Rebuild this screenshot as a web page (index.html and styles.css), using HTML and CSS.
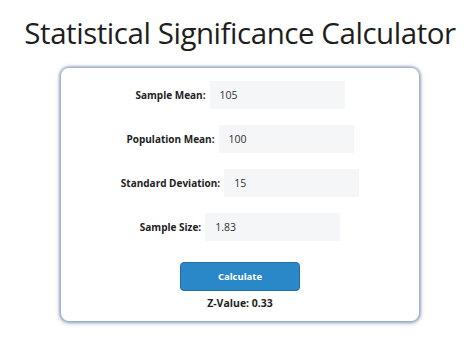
FILE: index.html
```html
<!DOCTYPE html>
<html lang="en">

<head>
    <meta charset="UTF-8">
    <meta name="viewport" content="width=device-width, initial-scale=1.0">
    <title>Statistical Significance Calculator</title>

    <link rel="stylesheet" href="styles.css">
</head>

<body>
    <main>
        <h1>Statistical Significance Calculator</h1>

        <div class="calculator">
            <div class="row">
                <label for="sample-mean">Sample Mean:</label>
                <input type="text" id="sample-mean" value="105">
            </div>

            <div class="row">
                <label for="population-mean">Population Mean:</label>
                <input type="text" id="population-mean" value="100">
            </div>

            <div class="row">
                <label for="std-dev">Standard Deviation:</label>
                <input type="text" id="std-dev" value="15">
            </div>

            <div class="row">
                <label for="sample-size">Sample Size:</label>
                <input type="text" id="sample-size" value="1.83">
            </div>

            <button id="calculate">Calculate</button>

            <p class="result">Z-Value: 0.33</p>
        </div>
    </main>
</body>

</html>
```

FILE: styles.css
```css
body {
    margin: 0;
    padding-bottom: 20px;
    background: #ffffff;
    font-family: "Open Sans", "Noto Sans", sans-serif;
    color: #222222;
}

main {
    display: flex;
    flex-direction: column;
    align-items: center;
}

h1 {
    margin: 12px 0 0 6px;
    font-size: 29.5px;
    font-weight: 400;
    line-height: 42px;
    color: #1e1e1e;
    letter-spacing: -0.45px;
}

.calculator {
    display: flex;
    flex-direction: column;
    align-items: center;
    width: 358px;
    box-sizing: border-box;
    margin: 14px 0 0 6px;
    padding: 13px 0 10px 0;
    border-radius: 8px;
    background: #ffffff;
    box-shadow: 0 0 2px 2px rgba(120, 145, 180, 0.55), 0 1px 5px 1px rgba(90, 115, 150, 0.45);
}

.row {
    display: flex;
    align-items: center;
    gap: 4px;
    margin-bottom: 16px;
}

.row label {
    font-size: 10px;
    font-weight: 700;
    color: #222222;
}

.row input {
    width: 135px;
    height: 28px;
    box-sizing: border-box;
    padding: 0 10px;
    border: none;
    outline: none;
    background: #f5f6f7;
    font-family: inherit;
    font-size: 10.5px;
    color: #333333;
}

button#calculate {
    width: 120px;
    height: 29px;
    margin-top: 5px;
    border: 1px solid #1f6ea6;
    border-radius: 4px;
    background: #2a88c9;
    color: #ffffff;
    font-family: inherit;
    font-size: 9.5px;
    font-weight: 700;
}

.result {
    margin: 4px 0 0 0;
    font-size: 10.5px;
    font-weight: 700;
    line-height: 16px;
    color: #222222;
}
```
